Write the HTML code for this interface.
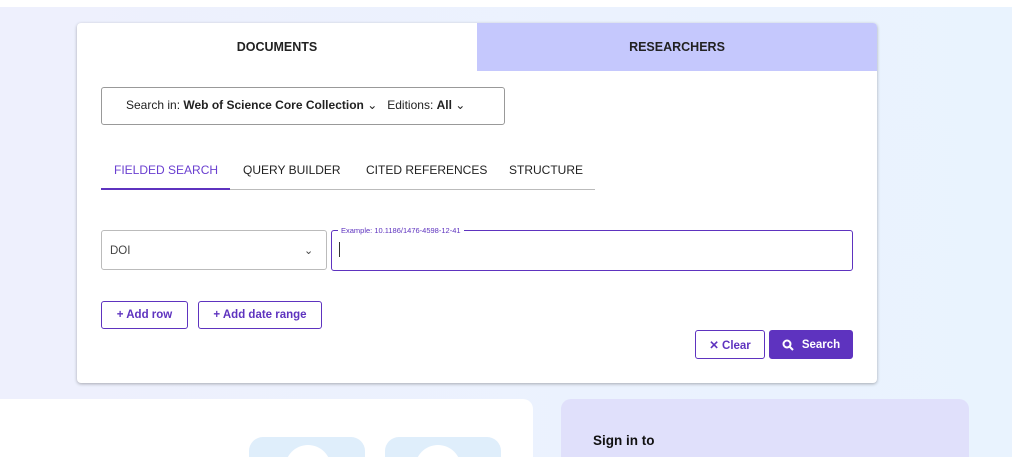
<!DOCTYPE html><html><head><style>
html,body{margin:0;width:1012px;height:457px;overflow:hidden}
body{font-family:"Liberation Sans",sans-serif;background:#fff;position:relative}
.bg{position:absolute;left:0;top:7px;width:1012px;height:450px;background:linear-gradient(90deg,#eef0fd,#e9f3fe)}
.a{position:absolute}
.card{left:77px;top:23px;width:800px;height:360px;background:#fff;border-radius:4px;box-shadow:0 1px 3px rgba(0,0,0,.3)}
.t{font-size:13px;color:#222;white-space:nowrap}
.btn{border:1px solid #5e33bf;border-radius:3px;color:#5e33bf;font-size:11.5px;font-weight:bold;display:flex;align-items:center;justify-content:center;box-sizing:border-box}
</style></head><body>
<div class="bg"></div>
<div class="a card"></div>
<div class="a" style="left:477px;top:23px;width:400px;height:48px;background:#c5c8fd;border-top-right-radius:4px"></div>
<div class="a t" style="left:77px;top:40px;width:400px;text-align:center;font-weight:bold;font-size:12.5px">DOCUMENTS</div>
<div class="a t" style="left:477px;top:40px;width:400px;text-align:center;font-weight:bold;font-size:12.5px">RESEARCHERS</div>
<div class="a" style="left:101px;top:87px;width:402px;height:36px;border:1px solid #999;border-radius:3px"></div>
<div class="a t" style="left:126px;top:98px;font-size:12px">Search in: <b>Web of Science Core Collection</b> &#8964;&nbsp;&nbsp; Editions: <b>All</b> &#8964;</div>
<div class="a t" style="left:114px;top:163px;color:#6a3fd0;font-size:12px">FIELDED SEARCH</div>
<div class="a t" style="left:243px;top:163px;font-size:12px">QUERY BUILDER</div>
<div class="a t" style="left:366px;top:163px;font-size:12px">CITED REFERENCES</div>
<div class="a t" style="left:509px;top:163px;font-size:12px">STRUCTURE</div>
<div class="a" style="left:101px;top:189px;width:494px;height:1px;background:#bbb"></div>
<div class="a" style="left:101px;top:188px;width:129px;height:2px;background:#5e33bf"></div>
<div class="a" style="left:101px;top:230px;width:226px;height:40px;border:1px solid #bbb;border-radius:3px;box-sizing:border-box"></div>
<div class="a t" style="left:110px;top:245px;font-size:11.5px;color:#444">DOI</div>
<div class="a t" style="left:304px;top:244px;font-size:11px;color:#444">&#8964;</div>
<div class="a" style="left:331px;top:230px;width:522px;height:41px;border:1px solid #5e33bf;border-radius:3px;box-sizing:border-box"></div>
<div class="a" style="left:338px;top:225px;background:#fff;padding:0 3px;font-size:7.5px;color:#5e33bf;line-height:12px">Example: 10.1186/1476-4598-12-41</div>
<div class="a" style="left:339px;top:242px;width:1px;height:15px;background:#333"></div>
<div class="a btn" style="left:101px;top:301px;width:87px;height:28px">+ Add row</div>
<div class="a btn" style="left:198px;top:301px;width:124px;height:28px">+ Add date range</div>
<div class="a btn" style="left:695px;top:330px;width:70px;height:29px">✕ Clear</div>
<div class="a btn" style="left:769px;top:330px;width:84px;height:29px;background:#5e33bf;color:#fff"><svg width="12" height="12" viewBox="0 0 12 12" style="margin-right:8px"><circle cx="5" cy="5" r="3.5" fill="none" stroke="#fff" stroke-width="2"/><path d="M7.5 7.5L11 11" stroke="#fff" stroke-width="2"/></svg>Search</div>
<div class="a" style="left:0;top:399px;width:533px;height:58px;background:#fff;border-radius:0 10px 0 0"></div>
<div class="a" style="left:249px;top:437px;width:116px;height:20px;background:#dfeefb;border-radius:14px 14px 0 0;overflow:hidden"><div style="position:absolute;left:36px;top:8px;width:46px;height:46px;border-radius:50%;background:#fff"></div></div>
<div class="a" style="left:385px;top:437px;width:116px;height:20px;background:#dfeefb;border-radius:14px 14px 0 0;overflow:hidden"><div style="position:absolute;left:30px;top:8px;width:46px;height:46px;border-radius:50%;background:#fff"></div></div>
<div class="a" style="left:561px;top:399px;width:408px;height:58px;background:#e0e0fb;border-radius:10px 10px 0 0"></div>
<div class="a t" style="left:593px;top:433px;font-weight:bold;font-size:13.5px;color:#111">Sign in to</div>
</body></html>
